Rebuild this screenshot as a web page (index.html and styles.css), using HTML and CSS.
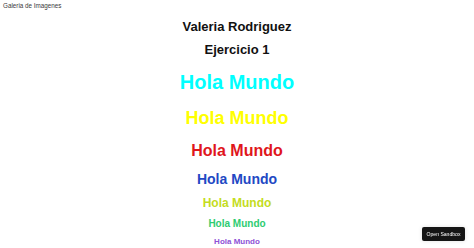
FILE: index.html
```html
<!DOCTYPE html>
<html lang="es">
<head>
<meta charset="utf-8">
<title>Galeria de Imagenes</title>
<link rel="stylesheet" href="styles.css">
</head>
<body>
<div class="topbar">Galeria de Imagenes</div>
<main class="content">
  <h1 class="name">Valeria Rodriguez</h1>
  <h2 class="exercise">Ejercicio 1</h2>
  <p class="hola s1">Hola Mundo</p>
  <p class="hola s2">Hola Mundo</p>
  <p class="hola s3">Hola Mundo</p>
  <p class="hola s4">Hola Mundo</p>
  <p class="hola s5">Hola Mundo</p>
  <p class="hola s6">Hola Mundo</p>
  <p class="hola s7">Hola Mundo</p>
</main>
<button class="sandbox">Open Sandbox</button>
</body>
</html>
```
FILE: styles.css
```css
html, body {
  margin: 0;
  padding: 0;
  background: #ffffff;
  font-family: "Liberation Sans", Arial, sans-serif;
}
.topbar {
  font-size: 6.3px;
  line-height: 12px;
  padding-left: 3px;
  color: #3a3a3a;
}
.content {
  display: flex;
  flex-direction: column;
  align-items: center;
  font-weight: bold;
}
.content > * {
  margin: 0;
  font-weight: bold;
  white-space: nowrap;
}
.name {
  font-size: 13px;
  line-height: 16px;
  margin-top: 7px;
  color: #111;
}
.exercise {
  font-size: 13px;
  line-height: 16px;
  margin-top: 7px;
  color: #111;
}
.s1 { font-size: 20px; line-height: 24px; margin-top: 12px; color: #00ffff; }
.s2 { font-size: 18px; line-height: 22px; margin-top: 13px; color: #ffff00; }
.s3 { font-size: 16px; line-height: 20px; margin-top: 12px; color: #e0161c; }
.s4 { font-size: 14px; line-height: 18px; margin-top: 9px; color: #2248c4; }
.s5 { font-size: 12px; line-height: 16px; margin-top: 7px; color: #c4dc22; }
.s6 { font-size: 10px; line-height: 14px; margin-top: 6px; color: #2ecc71; }
.s7 { font-size: 8px; line-height: 10px; margin-top: 6px; color: #8e52d6; }
.sandbox {
  position: fixed;
  right: 9px;
  bottom: 7px;
  width: 43px;
  height: 14px;
  padding: 0;
  border: none;
  border-radius: 2px;
  background: #151515;
  color: #ffffff;
  font-family: "Liberation Sans", Arial, sans-serif;
  font-size: 5.1px;
  box-shadow: 0 0 4px rgba(0,0,0,0.12);
}
```
